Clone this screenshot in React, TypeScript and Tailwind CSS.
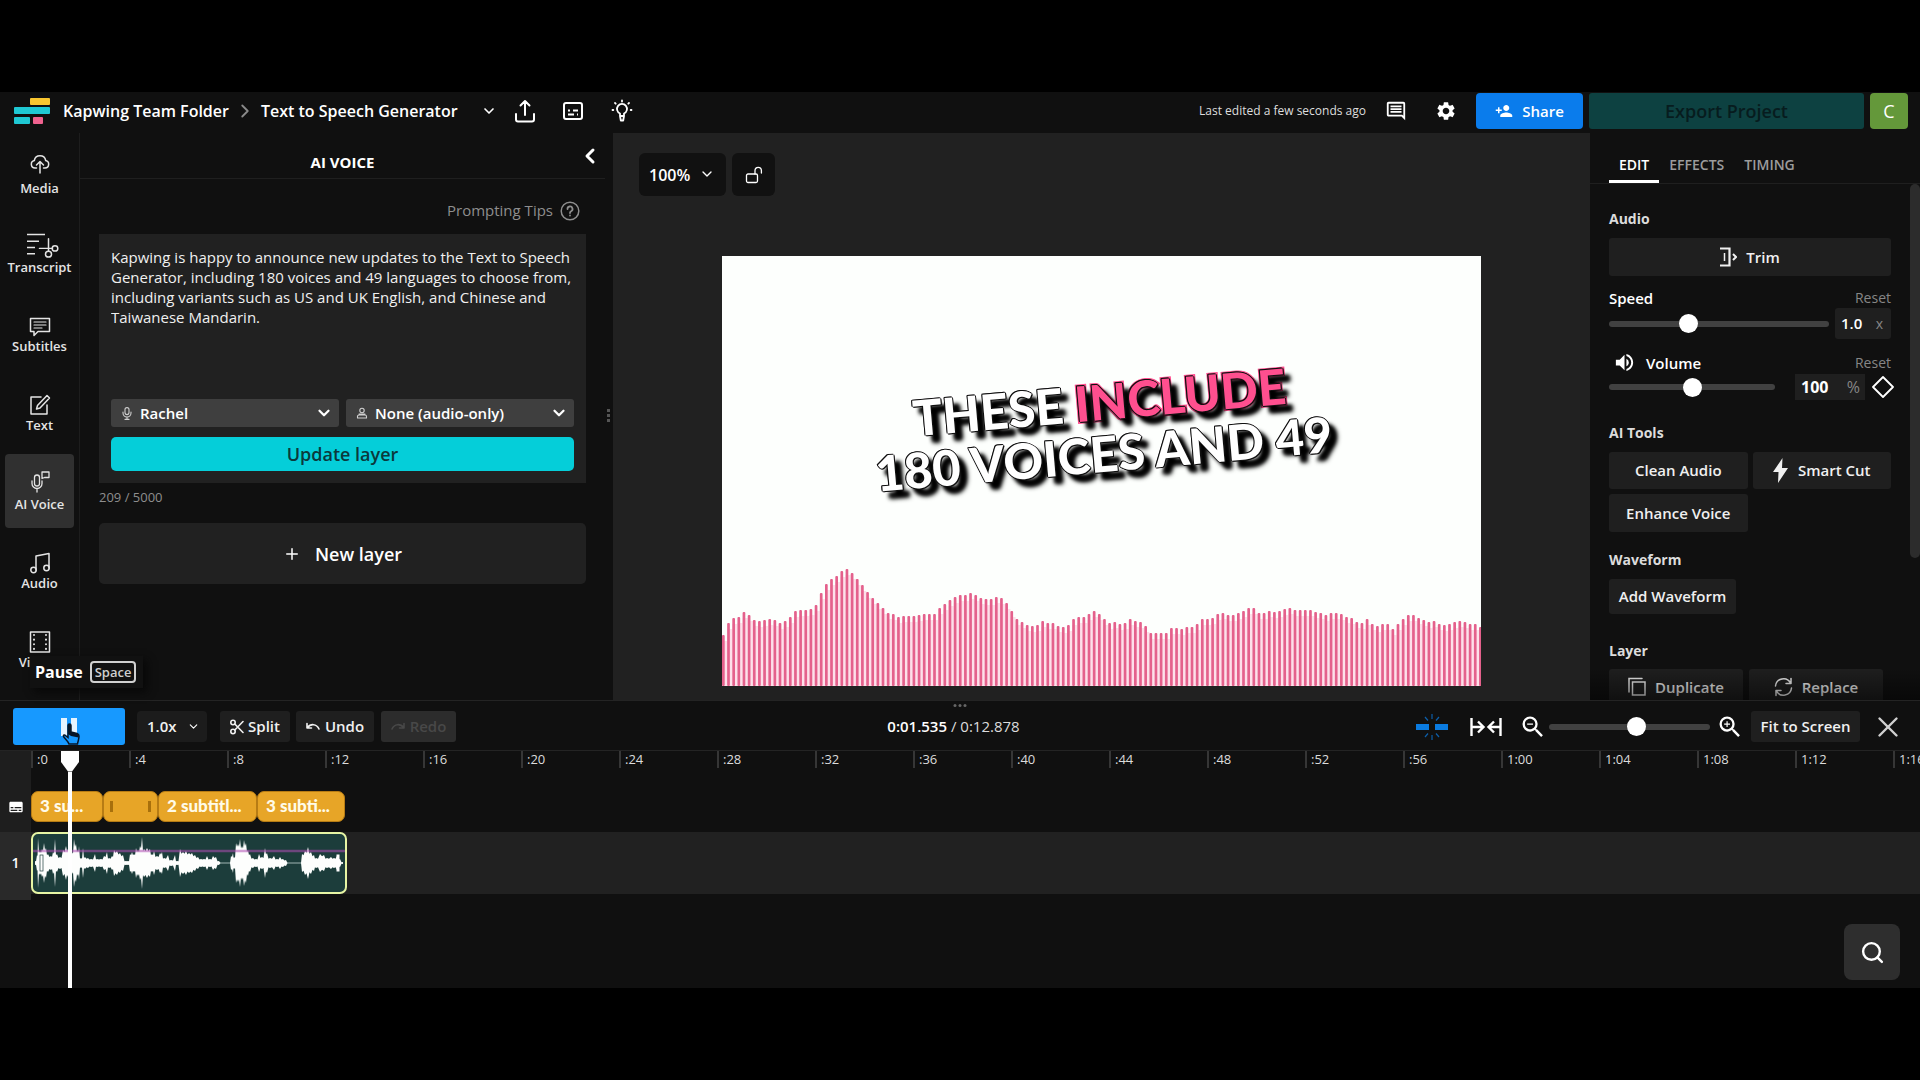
import React from "react";
import { ChevronDown, ChevronLeft, ChevronRight, Plus, Search, X } from "lucide-react";
import {
  MdOutlineComment,
  MdPersonAdd,
  MdSettings,
  MdSubtitles,
  MdVolumeUp,
  MdZoomIn,
  MdZoomOut,
} from "react-icons/md";

const prompt =
  "Kapwing is happy to announce new updates to the Text to Speech Generator, including 180 voices and 49 languages to choose from, including variants such as US and UK English, and Chinese and Taiwanese Mandarin.";

const stageBars = [
  51, 63, 68, 69, 74, 71, 66, 65, 66, 67, 66, 63, 65, 69, 75, 76, 76, 77, 81, 93, 102, 107, 110, 115, 117, 113, 107,
  101, 94, 88, 83, 78, 73, 72, 69, 70, 70, 70, 71, 72, 72, 72, 78, 82, 86, 89, 91, 91, 93, 91, 88, 87, 87, 89, 88,
  83, 75, 67, 64, 61, 60, 61, 65, 63, 63, 60, 59, 61, 67, 69, 69, 72, 75, 72, 67, 63, 64, 62, 63, 67, 65, 64, 60, 53,
  53, 53, 53, 58, 58, 57, 59, 59, 62, 67, 67, 68, 72, 73, 71, 71, 73, 75, 78, 78, 73, 73, 75, 74, 75, 77, 78, 76, 76,
  76, 76, 74, 73, 71, 73, 73, 72, 69, 68, 64, 63, 67, 62, 60, 62, 62, 57, 62, 67, 71, 71, 68, 66, 64, 65, 62, 61, 62,
  64, 65, 64, 62, 62, 59,
];

// [x, half height] samples of the speech clip
const clipWave: [number, number][] = [
  [2, 2], [4, 8], [5, 25], [7, 12], [9, 14], [11, 20], [13, 15], [15, 9], [18, 7], [20, 11], [22, 24], [24, 9], [27, 6],
  [30, 13], [33, 17], [35, 14], [37, 18], [39, 11], [41, 24], [43, 19], [45, 13], [46, 17], [48, 5], [50, 15], [52, 6],
  [55, 5], [58, 4], [62, 9], [64, 4], [68, 4], [71, 7], [74, 11], [76, 5], [79, 7], [81, 13], [84, 12], [87, 10],
  [90, 8], [93, 2], [95, 2], [97, 9], [99, 11], [101, 9], [103, 15], [105, 13], [107, 17], [109, 26], [111, 14],
  [114, 15], [117, 14], [119, 9], [121, 12], [124, 7], [127, 10], [129, 11], [131, 5], [135, 8], [138, 3], [142, 8],
  [144, 2], [147, 14], [150, 11], [153, 12], [156, 10], [159, 10], [162, 8], [165, 6], [168, 4], [171, 4], [174, 7],
  [177, 4], [180, 7], [183, 6], [186, 2], [189, 0], [196, 0], [198, 7], [200, 10], [201, 6], [203, 20], [205, 19],
  [207, 24], [209, 17], [211, 23], [213, 20], [215, 13], [217, 9], [220, 5], [223, 4], [226, 9], [229, 6], [232, 15],
  [234, 10], [237, 5], [241, 7], [244, 4], [247, 6], [250, 4], [253, 3], [256, 0], [267, 0], [269, 9], [272, 12],
  [275, 16], [278, 11], [281, 8], [283, 5], [287, 9], [291, 8], [294, 5], [298, 6], [301, 5], [304, 7], [307, 4], [310, 1],
];

const ticks = [
  ":0", ":4", ":8", ":12", ":16", ":20", ":24", ":28", ":32", ":36", ":40", ":44", ":48", ":52", ":56", "1:00", "1:04",
  "1:08", "1:12", "1:16",
];

const line = {
  fill: "none",
  stroke: "currentColor",
  strokeWidth: 1.5,
  strokeLinecap: "round",
  strokeLinejoin: "round",
} as const;

const MediaIcon = () => (
  <svg width="20" height="26" viewBox="0 0 20 26" {...line}>
    <path d="M6.500 15H5a3.800 3.800 0 0 1-.7-7.500 5.800 5.800 0 0 1 11.400 0A3.800 3.800 0 0 1 15 15h-1.500" />
    <path d="M10 20V9M6.500 12 10 8.500l3.500 3.500" />
  </svg>
);

const TranscriptIcon = () => (
  <svg className="ml-1" width="34" height="25" viewBox="0 0 34 26" preserveAspectRatio="none" {...line}>
    <path d="M2 1.500h18M2 8.500h12M2 15h8M2 21.500h8" strokeLinecap="butt" />
    <path d="M23.500 6v12.500M14.500 16h13" />
    <circle cx="23.500" cy="22" r="3" />
    <circle cx="30" cy="16" r="2.800" />
  </svg>
);

const SubtitlesIcon = () => (
  <svg width="22" height="20" viewBox="0 0 22 20" {...line}>
    <path d="M1.500 1.500h19v13H9l-4 4v-4H1.500z" />
    <path d="M5 5h12M5 8h12M5 11h8" strokeWidth="1.200" />
  </svg>
);

const TextIcon = () => (
  <svg width="22" height="22" viewBox="0 0 22 22" {...line}>
    <path d="M12 3H2v17h16V11" />
    <path d="M18 1.500 20.500 4 11 14l-3.500 1 1-3.500z" />
  </svg>
);

const VoiceIcon = () => (
  <svg width="20" height="24" viewBox="0 0 20 24" {...line} strokeWidth={1.3}>
    <rect x="4.500" y="4" width="5" height="11" rx="2.500" />
    <path d="M2 10v2.500a5 5 0 0 0 10 0V10M7 17.500V21M12 7.500V1h7v5.500h-4.500z" />
  </svg>
);

const AudioIcon = () => (
  <svg width="22" height="22" viewBox="0 0 22 22" {...line}>
    <path d="M7 18V4l13-2.500V16" />
    <circle cx="4.500" cy="18" r="2.700" />
    <circle cx="17.500" cy="16" r="2.700" />
  </svg>
);

const VideoIcon = () => (
  <svg width="22" height="22" viewBox="0 0 22 22" {...line}>
    <rect x="1.500" y="1" width="19" height="20" />
    <path d="M5 4v15M17 4v15" strokeWidth="2" strokeDasharray="0.100 4.500" />
  </svg>
);

const sidebar = [
  { name: "Media", icon: <MediaIcon /> },
  { name: "Transcript", icon: <TranscriptIcon /> },
  { name: "Subtitles", icon: <SubtitlesIcon /> },
  { name: "Text", icon: <TextIcon /> },
  { name: "AI Voice", icon: <VoiceIcon />, active: true },
  { name: "Audio", icon: <AudioIcon /> },
  { name: "Videos", icon: <VideoIcon /> },
];

function Slider({ label, value, className }: { label: string; value: number; className: string }) {
  return (
    <input
      type="range"
      aria-label={label}
      defaultValue={value}
      className={`h-[6px] appearance-none rounded-full bg-[#414141] [&::-webkit-slider-thumb]:size-[19px] [&::-webkit-slider-thumb]:appearance-none [&::-webkit-slider-thumb]:rounded-full [&::-webkit-slider-thumb]:bg-white ${className}`}
    />
  );
}

function Header() {
  return (
    <header className="flex h-[41px] shrink-0 items-start pt-px">
      <div className="flex h-9 flex-1 items-center">
        <svg className="ml-[14px]" width="36" height="26" viewBox="0 0 36 26">
          <rect x="16" y="0" width="20" height="7" rx="1" fill="#f9c62f" />
          <rect x="0" y="9" width="36" height="7" rx="1" fill="#1fc8d3" />
          <rect x="0" y="19" width="16" height="7" rx="1" fill="#1fc8d3" />
          <rect x="19" y="19" width="10" height="7" rx="1" fill="#f0628f" />
        </svg>
        <a href="#folder" className="ml-[13px] text-base font-semibold">
          Kapwing Team Folder
        </a>
        <ChevronRight className="mx-[5px] text-[#8a8a8a]" size={22} />
        <button className="flex items-center gap-[23px] text-base font-semibold">
          Text to Speech Generator
          <ChevronDown size={16} strokeWidth={2.5} />
        </button>
        <button aria-label="Upload" className="ml-[17px]">
          <svg width="22" height="24" viewBox="0 0 22 24" {...line} strokeWidth={2}>
            <path d="M11 16V2M6.500 6.500 11 2l4.500 4.500M2 15v5.500a2 2 0 0 0 2 2h14a2 2 0 0 0 2-2V15" />
          </svg>
        </button>
        <button aria-label="Captions" className="ml-[26px]">
          <svg width="22" height="20" viewBox="0 0 22 20" {...line} strokeWidth={2}>
            <rect x="2" y="2" width="18" height="16" rx="2" />
            <path d="M6 9.500h2M11 9.500h5M6 13.500h6M15 13.500h1" strokeLinecap="butt" />
          </svg>
        </button>
        <button aria-label="Tips" className="ml-[27px]">
          <svg width="22" height="24" viewBox="0 0 22 24" {...line} strokeWidth={1.8}>
            <path d="M9 17v-2.500a5 5 0 1 1 4 0V17M9 17h4l-.8 4.500h-2.400z" />
            <path d="M11 1.500v1M4 4l.7.700M18 4l-.7.700M1.500 11h.8M19.700 11h.8" />
          </svg>
        </button>
      </div>
      <div className="flex h-9 items-center text-xs text-[#dedede]">
        Last edited a few seconds ago
        <button aria-label="Comments" className="ml-[19px] text-white">
          <MdOutlineComment size={22} />
        </button>
        <button aria-label="Settings" className="ml-[28px] text-white">
          <MdSettings size={22} />
        </button>
      </div>
      <button className="ml-[19px] flex h-9 w-[107px] items-center justify-center gap-[9px] rounded bg-[#0a7cec] text-[15px] font-semibold">
        <MdPersonAdd size={18} />
        Share
      </button>
      <button className="ml-[6px] h-9 w-[275px] rounded-[3px] bg-[#0d4141] text-lg font-semibold text-[#071c1e]">
        Export Project
      </button>
      <button className="ml-[6px] mr-3 h-9 w-[38px] rounded bg-[#64983a] text-lg">C</button>
    </header>
  );
}

function Sidebar() {
  return (
    <nav className="flex w-20 shrink-0 flex-col gap-[5px] overflow-hidden border-r border-[#1d1d1d] px-[5px] pt-[5px]">
      {sidebar.map((item) => (
        <button
          key={item.name}
          className={`flex h-[74px] shrink-0 flex-col items-center rounded pt-[15px] text-[13px] font-semibold text-[#e4e4e4] ${
            item.active ? "bg-[#303030]" : ""
          }`}
        >
          <span className="flex h-[26px] items-end">{item.icon}</span>
          <span className="leading-[18px]">{item.name}</span>
        </button>
      ))}
    </nav>
  );
}

function VoiceSelect({ label, value, children }: { label: string; value: string; children: React.ReactNode }) {
  return (
    <div className="relative flex-1">
      <span className="absolute top-2 left-[10px] text-[#d0d0d0]">{children}</span>
      <select
        aria-label={label}
        className="h-7 w-full appearance-none rounded-[3px] bg-[#3f3f3f] pl-[29px] text-[15px] font-semibold"
      >
        <option>{value}</option>
      </select>
      <ChevronDown className="pointer-events-none absolute top-[5px] right-[6px]" size={18} strokeWidth={3} />
    </div>
  );
}

function VoicePanel() {
  return (
    <section className="relative flex w-[533px] shrink-0 flex-col overflow-hidden">
      <div className="mr-2 flex h-[46px] shrink-0 items-center justify-center border-b border-[#1f1f1f] pt-[14px]">
        <h2 className="text-[15px] font-bold">AI VOICE</h2>
      </div>
      <button aria-label="Collapse panel" className="absolute top-[11px] right-[11px]">
        <ChevronLeft size={24} strokeWidth={3} />
      </button>
      <div className="pl-[19px] pr-[27px]">
        <div className="flex h-[55px] items-center justify-end gap-[7px] pt-2 pr-[6px] text-[15px] text-[#8e8e8e]">
          Prompting Tips
          <svg width="20" height="20" viewBox="0 0 20 20" {...line}>
            <circle cx="10" cy="10" r="8.800" />
            <path d="M7.500 8a2.500 2.500 0 1 1 3.600 2.200c-.8.400-1.100.8-1.100 1.800M10 14.500v.1" strokeWidth="1.800" />
          </svg>
        </div>
        <div className="bg-[#212121] p-3">
          <textarea
            aria-label="Voice prompt"
            defaultValue={prompt}
            className="block h-[153px] w-full resize-none overflow-hidden pt-px text-[15px] leading-5 text-[#f0f0f0] outline-none"
          />
          <div className="flex gap-[7px]">
            <VoiceSelect label="Voice" value="Rachel">
              <svg width="12" height="13" viewBox="0 0 12 13" {...line} strokeWidth={1.1}>
                <rect x="4" y="0.600" width="4" height="7" rx="2" />
                <path d="M2 5v1a4 4 0 0 0 8 0V5M6 10v2M4 12.400h4" />
              </svg>
            </VoiceSelect>
            <VoiceSelect label="Persona" value="None (audio-only)">
              <svg width="12" height="13" viewBox="0 0 12 13" {...line} strokeWidth={1.1}>
                <circle cx="6" cy="3.500" r="2.200" />
                <path d="M3 7h6M1.500 11V9.500a1.500 1.500 0 0 1 1.500-1.500h6a1.500 1.500 0 0 1 1.500 1.500V11z" />
              </svg>
            </VoiceSelect>
          </div>
          <button className="mt-[10px] h-[34px] w-full rounded-[5px] bg-[#05ced9] text-lg font-semibold text-[#0b393c]">
            Update layer
          </button>
        </div>
        <p className="mt-1 text-[13px] leading-5 text-[#8e8e8e]">209 / 5000</p>
        <button className="mt-4 flex h-[61px] w-full items-center justify-center gap-[14px] rounded-[5px] bg-[#212121] text-lg font-semibold">
          <Plus size={18} />
          New layer
        </button>
      </div>
      <div className="absolute top-[276px] right-[3px] flex flex-col gap-[2px]">
        <i className="size-[3px] bg-[#555]" />
        <i className="size-[3px] bg-[#555]" />
        <i className="size-[3px] bg-[#555]" />
      </div>
    </section>
  );
}

function Stage() {
  return (
    <main className="flex min-w-0 flex-1 flex-col bg-[#212121]">
      <div className="flex gap-[6px] pt-5 pl-[26px]">
        <div className="relative">
          <select
            aria-label="Canvas zoom"
            className="h-[43px] w-[87px] appearance-none rounded-md bg-[#111] pl-[10px] text-base font-semibold"
          >
            <option>100%</option>
          </select>
          <ChevronDown className="pointer-events-none absolute top-[13px] right-[11px]" size={16} />
        </div>
        <button aria-label="Unlock canvas" className="flex size-[43px] items-center justify-center rounded-md bg-[#111]">
          <svg width="18" height="18" viewBox="0 0 18 18" {...line} strokeWidth={1.3}>
            <rect x="1.500" y="8" width="11" height="8.500" rx="1.500" />
            <path d="M10 8V4.500a3.200 3.200 0 0 1 6.400 0V7" />
          </svg>
        </button>
      </div>
      <div className="mx-[109px] mt-[60px] mb-[14px] flex flex-1 flex-col justify-between bg-[#fdfffd]">
        <div
          className="mt-[119px] -rotate-5 text-center text-[49px] leading-[52px] font-black whitespace-nowrap text-white [-webkit-text-stroke:4px_currentColor] [paint-order:stroke_fill] [text-shadow:1px_0_#111,-1px_0_#111,0_1px_#111,0_-1px_#111,1px_1px_#111,-1px_-1px_#111,6px_7px_4px_#000,7px_8px_5px_#000]"
          style={{ fontFamily: "Lato, sans-serif" }}
        >
          THESE <span className="text-[#ff4f8f]">INCLUDE</span>
          <br />
          180 VOICES AND 49
        </div>
        <svg className="h-[118px] w-full" viewBox="0 0 759 118" preserveAspectRatio="none">
          {stageBars.map((h, i) => (
            <g key={i}>
              <rect x={i * 5.15} y={124 - h} width="5.2" height={h - 6} fill="#fde0ea" />
              <rect x={i * 5.15} y={118 - h} width="2.7" height={h} rx="1" fill="#e4618c" />
            </g>
          ))}
        </svg>
      </div>
    </main>
  );
}

function ToolButton({ className, children }: { className: string; children: React.ReactNode }) {
  return (
    <button
      className={`flex items-center justify-center rounded-[3px] bg-[#1f1f1f] text-[15px] font-semibold text-[#f0f0f0] ${className}`}
    >
      {children}
    </button>
  );
}

function Inspector() {
  return (
    <aside className="relative w-[330px] shrink-0 overflow-hidden">
      <div role="tablist" className="flex h-[51px] items-end border-b border-[#1f1f1f] pl-[19px] text-sm font-semibold">
        <button role="tab" aria-selected="true" className="h-[36px] border-b-3 border-white px-[10px] pt-[2px]">
          EDIT
        </button>
        <button role="tab" className="h-[36px] px-[10px] pb-px text-[#9c9c9c]">
          EFFECTS
        </button>
        <button role="tab" className="h-[36px] px-[10px] pb-px text-[#9c9c9c]">
          TIMING
        </button>
      </div>
      <div className="w-[301px] pl-[19px]">
        <h3 className="mt-[25px] text-sm leading-5 font-bold text-[#dcdcdc]">Audio</h3>
        <ToolButton className="mt-[9px] h-[38px] w-full gap-[9px]">
          <svg width="17" height="20" viewBox="0 0 17 20" {...line} strokeLinecap="butt" strokeLinejoin="miter">
            <path d="M0 1.500h9.500v17H0" strokeWidth="2.200" />
            <path d="M4.500 6v8" />
            <path d="m13 7 3 3-3 3" strokeWidth="2" />
          </svg>
          Trim
        </ToolButton>
        <div className="mt-3 flex justify-between leading-5">
          <span className="text-[15px] font-semibold">Speed</span>
          <button className="text-sm text-[#868686]">Reset</button>
        </div>
        <div className="flex h-[31px] items-center justify-between">
          <Slider label="Speed" value={35} className="w-[220px]" />
          <label className="flex h-[31px] w-[56px] items-center justify-between rounded-[3px] bg-[#1f1f1f] pr-2 pl-[6px] text-sm text-[#868686]">
            <input aria-label="Speed value" defaultValue="1.0" className="w-7 text-[15px] font-semibold text-white" />x
          </label>
        </div>
        <div className="mt-3 flex items-center leading-5">
          <MdVolumeUp className="ml-1 mr-[10px]" size={23} />
          <span className="flex-1 text-[15px] font-semibold">Volume</span>
          <button className="text-sm text-[#868686]">Reset</button>
        </div>
        <div className="flex h-[26px] items-center">
          <Slider label="Volume" value={50} className="w-[166px]" />
          <label className="ml-5 flex h-[26px] w-[70px] items-center justify-between bg-[#1f1f1f] pr-[5px] pl-[6px] text-base text-[#868686]">
            <input aria-label="Volume value" defaultValue="100" className="w-8 font-bold text-white" />%
          </label>
          <button aria-label="Add keyframe" className="-mr-[3px] ml-[7px]">
            <svg width="22" height="22" viewBox="0 0 22 22" {...line} strokeWidth={1.8}>
              <path d="M11 1 21 11 11 21 1 11z" />
            </svg>
          </button>
        </div>
        <h3 className="mt-[23px] text-sm leading-5 font-bold text-[#dcdcdc]">AI Tools</h3>
        <div className="mt-[9px] grid grid-cols-2 gap-[5px]">
          <ToolButton className="h-[37px]">Clean Audio</ToolButton>
          <ToolButton className="h-[37px] gap-[10px]">
            <svg width="15" height="25" viewBox="0 0 15 25" fill="currentColor">
              <path d="M9.500 0 0 14h5.500L5 25l10-15H9z" />
            </svg>
            Smart Cut
          </ToolButton>
          <ToolButton className="h-[38px]">Enhance Voice</ToolButton>
        </div>
        <h3 className="mt-[18px] text-sm leading-5 font-bold text-[#dcdcdc]">Waveform</h3>
        <ToolButton className="mt-[9px] h-[35px] w-[127px]">Add Waveform</ToolButton>
        <h3 className="mt-[27px] text-sm leading-5 font-bold text-[#dcdcdc]">Layer</h3>
        <div className="mt-[8px] flex gap-[6px]">
          <ToolButton className="h-[36px] w-[134px] gap-[9px]">
            <svg width="18" height="20" viewBox="0 0 18 20" {...line} strokeLinejoin="miter">
              <rect x="4.500" y="5" width="12.500" height="13" />
              <path d="M1 15V1.500h13" />
            </svg>
            Duplicate
          </ToolButton>
          <ToolButton className="h-[36px] w-[134px] gap-[9px]">
            <svg width="19" height="20" viewBox="0 0 19 20" {...line}>
              <path d="M1.500 9A8 8 0 0 1 16.500 6M17 1.500V6.500h-5M17.500 11A8 8 0 0 1 2.500 14M2 18.500V13.500h5" />
            </svg>
            Replace
          </ToolButton>
        </div>
      </div>
      <div className="absolute inset-x-0 bottom-0 h-8 bg-linear-to-t from-black/50 to-transparent" />
      <div className="absolute top-[51px] right-0 h-[374px] w-[10px] rounded-md bg-[#2c2c2c]" />
    </aside>
  );
}

function Toolbar() {
  return (
    <div className="relative grid h-[51px] shrink-0 grid-cols-[1fr_auto_1fr] items-center border-y border-[#242424] pt-[2px] pr-[18px] pl-[13px]">
      <div className="absolute top-[3px] left-1/2 flex -translate-x-1/2 gap-[2px]">
        <i className="size-[3px] rounded-full bg-[#666]" />
        <i className="size-[3px] rounded-full bg-[#666]" />
        <i className="size-[3px] rounded-full bg-[#666]" />
      </div>
      <div className="flex items-center">
        <div className="relative">
          <button aria-label="Pause" className="flex h-[37px] w-[112px] items-center justify-center gap-1 rounded-[3px] bg-[#1799ff]">
            <i className="h-[18px] w-[6px] bg-[#e6f4ff]" />
            <i className="h-[18px] w-[6px] bg-[#e6f4ff]" />
          </button>
          <svg className="absolute top-[15px] left-[49px]" width="18" height="22" viewBox="0 0 18 22">
            <path
              d="M6 2.500a1.500 1.500 0 0 1 3 0V9l6 1.500c1.500.400 2 1.200 2 2.500 0 4-1 4.500-1.500 8H7c-.5-2.500-4-5-5.500-7.500C1 12 2.500 11.500 3.500 12.500L6 14.500z"
              fill="#1799ff"
              stroke="#071526"
              strokeWidth="1.500"
            />
            <path d="M6 2.500a1.500 1.500 0 0 1 3 0V9l6 1.500c1.500.400 2 1.500 1.500 4L9 13l-3-2z" fill="#071526" />
          </svg>
          <div
            role="tooltip"
            className="absolute bottom-[57px] left-[17px] flex h-[32px] w-[113px] items-center gap-[7px] bg-[#111] pl-[5px] shadow-[4px_4px_8px_#080808]"
          >
            <span className="text-base leading-5 font-bold">Pause</span>
            <kbd className="rounded border-2 border-[#d0d0d0] px-[3px] font-[inherit] text-[13px] leading-[18px] font-semibold text-[#cfcfcf]">
              Space
            </kbd>
          </div>
        </div>
        <div className="relative ml-3">
          <select
            aria-label="Playback speed"
            className="h-[31px] w-[70px] appearance-none rounded bg-[#1c1c1c] pl-[10px] text-[15px] font-semibold text-[#f0f0f0]"
          >
            <option>1.0x</option>
          </select>
          <ChevronDown className="pointer-events-none absolute top-[9px] right-[7px]" size={13} />
        </div>
        <ToolButton className="ml-[13px] h-[31px] w-[70px] gap-1">
          <svg width="14" height="16" viewBox="0 0 14 16" {...line} strokeWidth={1.6}>
            <circle cx="3" cy="3.500" r="2.200" />
            <circle cx="3" cy="12.500" r="2.200" />
            <path d="M4.800 5 13 13.500M4.800 11 13 2.500" />
          </svg>
          Split
        </ToolButton>
        <ToolButton className="ml-[6px] h-[31px] w-[78px] gap-[5px]">
          <svg width="14" height="10" viewBox="0 0 14 10" {...line} strokeWidth={1.6}>
            <path d="M1 1.500V6h4.500M1.500 5.500c3-4 9-4 11.500 1.500" />
          </svg>
          Undo
        </ToolButton>
        <button
          disabled
          className="ml-[7px] flex h-[31px] w-[75px] items-center justify-center gap-[5px] rounded-[3px] bg-[#2c2c2c] text-[15px] font-semibold text-[#484848]"
        >
          <svg width="14" height="10" viewBox="0 0 14 10" {...line} strokeWidth={1.6}>
            <path d="M13 1.500V6H8.500M12.500 5.500C9.500 1.500 3.500 1.500 1 7" />
          </svg>
          Redo
        </button>
      </div>
      <div className="pr-2 text-[15px] text-[#dcdcdc]">
        <span className="font-semibold text-white">0:01.535</span> / 0:12.878
      </div>
      <div className="flex items-center justify-end">
        <button aria-label="Snap">
          <svg width="34" height="26" viewBox="0 0 34 26">
            <path d="M1 10h13v6H1zM20 10h13v6H20z" fill="#0a7be0" />
            <path d="M17 0v5M17 21v5M10 3l3 3.500M24 3l-3 3.500M10 23l3-3.500M24 23l-3-3.500" stroke="#0d5ea8" strokeWidth="1.200" />
          </svg>
        </button>
        <button aria-label="Fit gaps" className="ml-[21px]">
          <svg width="32" height="20" viewBox="0 0 32 20" fill="none" stroke="currentColor" strokeWidth="2.400">
            <path d="M1.500 1v18M30.500 1v18M2 10h11M8 4.500l5.500 5.500L8 15.500M30 10H19M24 4.500 18.500 10l5.500 5.500" />
          </svg>
        </button>
        <button aria-label="Zoom out" className="ml-[17px]">
          <MdZoomOut size={28} />
        </button>
        <Slider label="Timeline zoom" value={55} className="ml-[2px] w-[161px]" />
        <button aria-label="Zoom in" className="ml-[6px]">
          <MdZoomIn size={28} />
        </button>
        <ToolButton className="ml-[7px] h-[31px] w-[109px]">Fit to Screen</ToolButton>
        <button aria-label="Close timeline" className="-mr-[3px] ml-[11px] text-[#d0d0d0]">
          <X size={34} strokeWidth={1.7} />
        </button>
      </div>
    </div>
  );
}

function Timeline() {
  // dip between neighbouring samples so the outline reads as separate peaks
  const wave = clipWave.flatMap(([x, h], i) => {
    const next = clipWave[i + 1];
    return next ? [[x, h], [(x + next[0]) / 2, Math.min(h, next[1]) * 0.85]] : [[x, h]];
  });
  const top = wave.map(([x, h]) => `${x},${29 - h}`);
  const bottom = [...wave].reverse().map(([x, h]) => `${x},${29 + h}`);

  return (
    <div className="relative flex min-h-0 flex-1">
      <div className="flex w-[31px] shrink-0 flex-col">
        <div className="flex h-[81px] items-end justify-center bg-[#1e1e1e] pb-[17px]">
          <MdSubtitles size={16} />
        </div>
        <div className="flex h-[68px] items-center justify-center bg-[#292929] pb-[6px] text-sm font-semibold">1</div>
      </div>
      <div className="min-w-0 flex-1 overflow-hidden">
        <div className="flex h-10">
          {ticks.map((t) => (
            <div
              key={t}
              className="h-[17px] w-[98px] shrink-0 border-l-2 border-[#363636] pl-[4px] text-[13px] leading-4 text-[#dcdcdc]"
            >
              {t}
            </div>
          ))}
        </div>
        <div
          className="flex h-[31px] text-[17px] leading-[28px] font-black whitespace-nowrap text-[#fffbe8]"
          style={{ fontFamily: "Lato, sans-serif" }}
        >
          <div className="w-[72px] rounded-[7px] border border-[#b77c14] bg-[#e7a527] pl-2">3 su...</div>
          <div className="flex w-[55px] items-center justify-between rounded-[7px] border border-[#b77c14] bg-[#e7a527] px-[6px]">
            <i className="h-[11px] w-[3px] bg-[#a8700c]" />
            <i className="h-[11px] w-[3px] bg-[#a8700c]" />
          </div>
          <div className="w-[99px] rounded-[7px] border border-[#b77c14] bg-[#e7a527] pl-2">2 subtitl...</div>
          <div className="w-[88px] rounded-[7px] border border-[#b77c14] bg-[#e7a527] pl-2">3 subti...</div>
        </div>
        <div className="mt-[10px] h-[62px] bg-[#212121]">
          <div className="h-[62px] w-[316px] rounded-[7px] border-2 border-[#e6f5a4] bg-[#1c3d3b]">
            <svg width="312" height="58" viewBox="0 0 312 58">
              <path d="M2 29h306" stroke="#9fb5b3" strokeWidth="1" />
              <polygon points={[...top, ...bottom].join(" ")} fill="#fdfefd" />
              <path d="M0 17h312" stroke="#b14fb5" strokeOpacity="0.550" strokeWidth="2.500" />
              <rect x="7" y="21" width="3" height="16" fill="#fff" stroke="#1c3d3b" strokeWidth="0.700" />
              <rect x="303.500" y="20.500" width="3" height="17" fill="#fff" />
            </svg>
          </div>
        </div>
      </div>
      {/* Playhead */}
      <div className="absolute top-0 bottom-0 left-[61px] flex w-[18px] flex-col items-center">
        <svg width="18" height="21" viewBox="0 0 18 21" className="shrink-0">
          <path d="M0 0h18v11l-7 9.500H7L0 11z" fill="#fff" />
        </svg>
        <div className="w-[4px] flex-1 bg-white" />
      </div>
      <button
        aria-label="Search"
        className="absolute right-5 bottom-2 flex size-14 items-center justify-center rounded-lg bg-[#2e2e2e]"
      >
        <Search size={25} strokeWidth={2.3} />
      </button>
    </div>
  );
}

export default function App() {
  return (
    <div
      className="flex h-screen flex-col bg-black py-23 text-white"
      style={{ fontFamily: '"Open Sans", "Noto Sans", sans-serif' }}
    >
      <div className="flex min-h-0 flex-1 flex-col bg-[#101010]">
        <Header />
        <div className="flex min-h-0 flex-1">
          <Sidebar />
          <VoicePanel />
          <Stage />
          <Inspector />
        </div>
        <div className="flex h-72 shrink-0 flex-col">
          <Toolbar />
          <Timeline />
        </div>
      </div>
    </div>
  );
}
